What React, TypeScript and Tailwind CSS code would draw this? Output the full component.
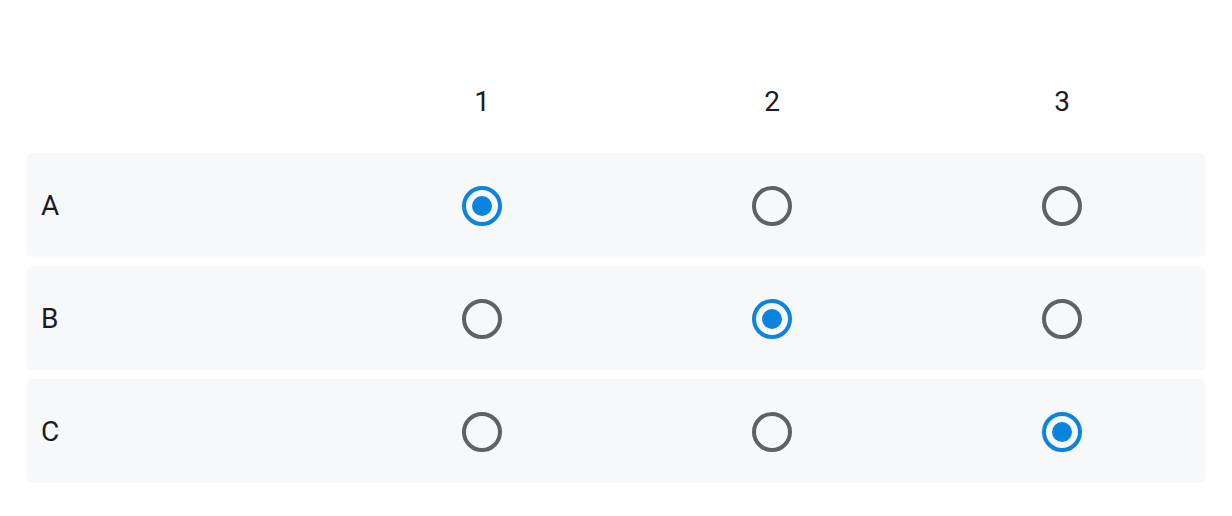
import React from "react";

const cols = ["1", "2", "3"];
const rows = [
  { label: "A", sel: 0 },
  { label: "B", sel: 1 },
  { label: "C", sel: 2 },
];

function Radio({ checked }: { checked: boolean }) {
  return checked ? (
    <div className="w-[40px] h-[40px] rounded-full border-[4px] border-[#0b84e0] flex items-center justify-center">
      <div className="w-[20px] h-[20px] rounded-full bg-[#0b84e0]" />
    </div>
  ) : (
    <div className="w-[40px] h-[40px] rounded-full border-[4px] border-[#5f6164]" />
  );
}

export default function App() {
  return (
    <div
      className="w-[1232px] h-[516px] bg-white px-[27px] text-[#1c1c1c]"
      style={{ fontFamily: "Roboto, 'Noto Sans', sans-serif" }}
    >
      <div className="grid grid-cols-[310px_290px_290px_290px] pt-[84px] pb-[33px]">
        <div />
        {cols.map((c) => (
          <div key={c} className="text-center text-[28px] leading-[36px]">
            {c}
          </div>
        ))}
      </div>
      <div className="flex flex-col gap-[9px]">
        {rows.map((r) => (
          <div
            key={r.label}
            className="grid grid-cols-[310px_290px_290px_290px] h-[104px] pt-[2px] items-center bg-[#f7f8fa] rounded-[5px]"
          >
            <div className="pl-[14px] text-[28px] leading-[36px]">{r.label}</div>
            {cols.map((c, i) => (
              <div key={c} className="flex justify-center">
                <Radio checked={i === r.sel} />
              </div>
            ))}
          </div>
        ))}
      </div>
    </div>
  );
}
